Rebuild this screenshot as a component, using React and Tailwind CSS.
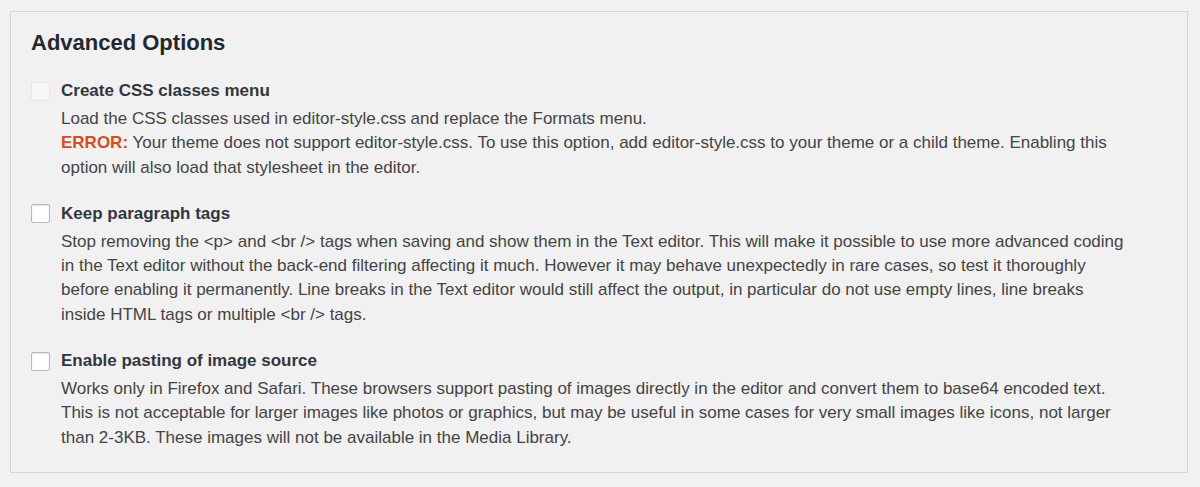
const items = [
  {
    title: 'Create CSS classes menu',
    disabled: true,
    lines: [
      'Load the CSS classes used in editor-style.css and replace the Formats menu.',
      <>
        <span className="font-bold text-[#d54e21]">ERROR:</span> Your theme does not support editor-style.css. To use this option, add editor-style.css to your theme or a child theme. Enabling this
      </>,
      'option will also load that stylesheet in the editor.',
    ],
  },
  {
    title: 'Keep paragraph tags',
    lines: [
      'Stop removing the <p> and <br /> tags when saving and show them in the Text editor. This will make it possible to use more advanced coding',
      'in the Text editor without the back-end filtering affecting it much. However it may behave unexpectedly in rare cases, so test it thoroughly',
      'before enabling it permanently. Line breaks in the Text editor would still affect the output, in particular do not use empty lines, line breaks',
      'inside HTML tags or multiple <br /> tags.',
    ],
  },
  {
    title: 'Enable pasting of image source',
    lines: [
      'Works only in Firefox and Safari. These browsers support pasting of images directly in the editor and convert them to base64 encoded text.',
      'This is not acceptable for larger images like photos or graphics, but may be useful in some cases for very small images like icons, not larger',
      'than 2-3KB. These images will not be available in the Media Library.',
    ],
  },
];

const Option = ({ title, lines, disabled }) => (
  <div>
    <div className="flex items-center gap-[11px] h-6">
      <span
        className={`w-[19px] h-[19px] shrink-0 rounded-[2px] border ${
          disabled ? 'border-[#e6e6e6] bg-[#f7f7f7]' : 'border-[#b4b9be] bg-white shadow-[inset_0_1px_2px_rgba(0,0,0,0.1)]'
        }`}
      />
      <span className="text-[17px] font-bold text-[#32373c]">{title}</span>
    </div>
    <div className="mt-1 pl-[30px] text-[17px] leading-[24.3px] text-[#444]">
      {lines.map((l, i) => (
        <div key={i} className="whitespace-nowrap">{l}</div>
      ))}
    </div>
  </div>
);

export default function App() {
  return (
    <div className="min-h-screen bg-[#f1f1f1] pt-[11px] pl-[10px] pr-[12px] font-['Liberation_Sans',Arial,sans-serif]">
      <div className="h-[462px] overflow-hidden border border-[#d5d5d5] bg-[#f1f1f1] pl-5 pr-5 pt-[17px]">
        <h2 className="text-[22px] font-bold leading-7 text-[#23282d]">Advanced Options</h2>
        <div className="mt-[22px] flex flex-col gap-[22px]">
          {items.map((it) => (
            <Option key={it.title} {...it} />
          ))}
        </div>
      </div>
    </div>
  );
}
